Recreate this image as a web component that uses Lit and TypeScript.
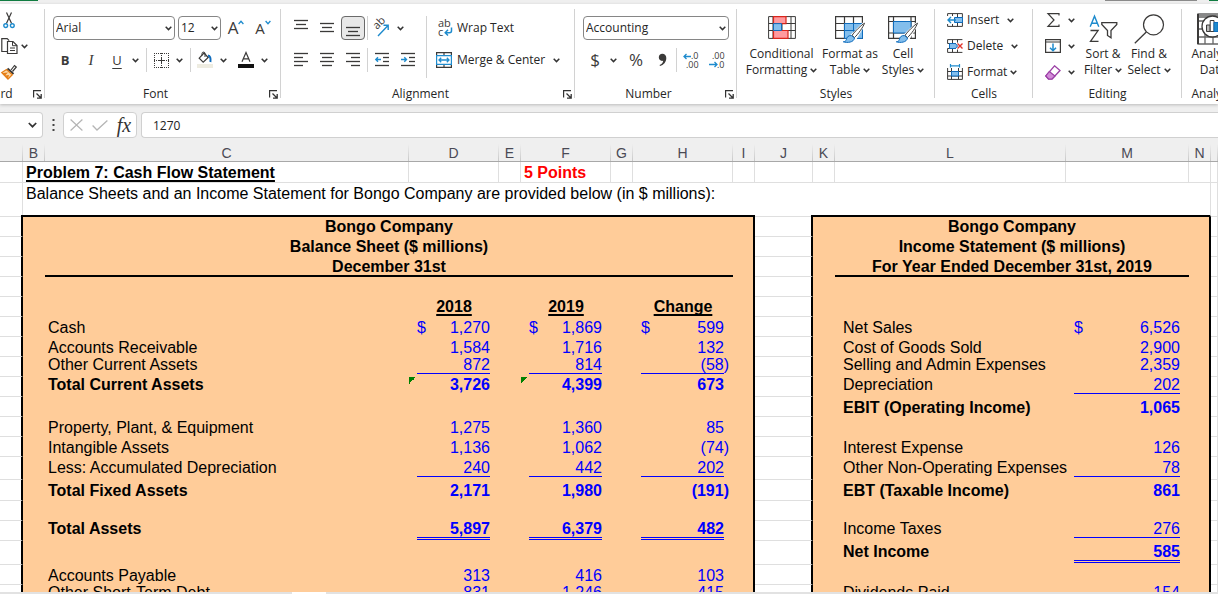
import { LitElement, html, css, svg, nothing, TemplateResult } from "lit";
import { customElement, property } from "lit/decorators.js";
import { classMap } from "lit/directives/class-map.js";

const icon = (w: number, h: number, body: unknown) =>
  html`<svg class="icon" width=${w} height=${h} viewBox="0 0 ${w} ${h}" fill="none" aria-hidden="true">${body}</svg>`;

const INK = "#3b3a39";
const BLUE = "#1e8bcd";
const DEEP = "#0f6cbd";
const SKY = "#83beec";

const chevron = icon(7, 5, svg`<path d="M.7 .8 3.5 3.6 6.3 .8" stroke="#333" stroke-width="1.5"/>`);

/** Horizontal strokes given as [x1, x2, y]. */
const bars = (rows: number[][]) =>
  rows.map(([a, b, y]) => svg`<path d="M${a} ${y}H${b}" stroke=${INK} stroke-width="1.3"/>`);

const alignIcon = (rows: number[][]) => icon(14, 24, bars(rows));

const I = {
  cut: icon(12, 17, svg`<path d="M3.5 .5 8.6 11.4M8.5 .5 3.4 11.4" stroke=${INK} stroke-width="1.2"/>
    <circle cx="2.7" cy="13.6" r="1.9" stroke=${BLUE} stroke-width="1.4"/><circle cx="9.3" cy="13.6" r="1.9" stroke=${BLUE} stroke-width="1.4"/>`),
  copy: icon(17, 16, svg`<path d="M6 13.5H.8V.6h5.400l2 2" stroke=${INK} stroke-width="1.2"/>
    <path d="M6.500 3.500h5.500l4 4v8H6.500z" fill="#fff" stroke=${INK} stroke-width="1.200"/><path d="M11.500 3.500v4.200H16M9 10h5M9 12.500h5" stroke=${INK}/>`),
  brush: icon(16, 16, svg`<path d="M10 6 13.500 1.500 15.300 3 11.500 7.500" fill="#fff" stroke=${INK} stroke-width="1.200"/>
    <path d="M6.500 4.500 12.500 10" stroke=${INK} stroke-width="2"/><path d="M5.500 5.500 .8 8.500 7 15 11.300 10.800z" fill="#fbd9a8" stroke="#e67e16" stroke-width="1.300"/>
    <path d="M1.500 9 7 8.500 4 11.500 8 11 7 14.500z" fill="#e67e16"/>`),
  launcher: icon(9, 9, svg`<path d="M.6 7.500V.6H8" stroke="#333" stroke-width="1.200"/><path d="M3.500 3.500 8 8M8.200 4v4.200H4" stroke="#333" stroke-width="1.300"/>`),
  up: icon(6, 5, svg`<path d="M.6 4 3 1.300 5.400 4" stroke=${BLUE} stroke-width="1.300"/>`),
  down: icon(6, 5, svg`<path d="M.6 1 3 3.700 5.400 1" stroke=${BLUE} stroke-width="1.300"/>`),
  borders: icon(15, 15, svg`<path d="M0 .5H15M0 14.500H15M.5 0V15M14.500 0V15" stroke=${INK} stroke-dasharray="1 1"/>
    <path d="M0 7.500H15M7.500 0V15" stroke=${INK} stroke-dasharray="1 1"/><path d="M5 7.500h5M7.500 5v5" stroke=${INK}/>`),
  bucket: icon(16, 16, svg`<path d="M7 1 2.200 6.200 6.200 10.200 11.200 5.500z" fill="#fff" stroke=${INK} stroke-width="1.200"/>
    <path d="M5 3.500V1.600a1.500 1.500 0 0 1 3 0V5" stroke=${INK}/><path d="M11 3.500c2 .3 3 2.500 2.400 6.500" stroke=${DEEP} stroke-width="2"/>
    <path d="M0 12h16v4H0z" fill="#eeece1"/>`),
  fontColor: icon(16, 16, svg`<path d="M4 9.800 8 .6 12 9.800M5.300 6.800h5.400" stroke=${INK} stroke-width="1.200"/><path d="M0 12h16v4H0z" fill="#111"/>`),
  top: alignIcon([[0, 14, 4.5], [2, 12, 8.5], [0, 14, 12.5]]),
  middle: alignIcon([[0, 14, 7.5], [2, 12, 11.5], [0, 14, 15.5]]),
  bottom: alignIcon([[0, 14, 11.5], [2, 12, 15.5], [0, 14, 19.5]]),
  left: alignIcon([[0, 14, 5.5], [0, 9, 9.5], [0, 14, 13.5], [0, 9, 17.5]]),
  center: alignIcon([[0, 14, 5.5], [2, 12, 9.5], [0, 14, 13.5], [2, 12, 17.5]]),
  right: alignIcon([[0, 14, 5.5], [5, 14, 9.5], [0, 14, 13.5], [5, 14, 17.5]]),
  outdent: icon(14, 24, [bars([[0, 14, 5.5], [8, 14, 9.5], [8, 14, 13.5], [0, 14, 17.5]]),
    svg`<path d="M6 11.500H.8M3 9.200.8 11.500 3 13.800" stroke=${BLUE} stroke-width="1.400"/>`]),
  indent: icon(14, 24, [bars([[0, 14, 5.5], [8, 14, 9.5], [8, 14, 13.5], [0, 14, 17.5]]),
    svg`<path d="M0 11.500H5.500M3.300 9.200 5.500 11.500 3.300 13.800" stroke=${BLUE} stroke-width="1.400"/>`]),
  orient: icon(18, 18, svg`<text class="glyph" x="0" y="0" font-size="11" transform="translate(4 11) rotate(-45)">ab</text>
    <path d="M5 17 15 6.500M10.500 6.300H15.200V11" stroke=${BLUE} stroke-width="1.400"/>`),
  wrap: icon(16, 18, svg`<text class="glyph" x="2" y="8" font-size="11">ab</text><text class="glyph" x="2" y="17" font-size="11">c</text>
    <path d="M15.500 8.500v3.200a2 2 0 0 1-2 2H9.300M12 10.800 9.200 13.700 12 16.500" stroke=${BLUE} stroke-width="1.500"/>`),
  merge: icon(16, 16, svg`<path d="M.6.6h14.800v14.800H.6zM.6 3.600h14.800M.6 12.400h14.800M8 .6v3M8 12.400v3" stroke=${INK} stroke-width="1.200"/>
    <path d="M.6 3.600h14.800v8.800H.6z" fill="#fff" stroke=${BLUE} stroke-width="1.200"/><path d="M3 8h10M5.200 5.800 3 8l2.200 2.200M10.800 5.800 13 8l-2.200 2.200" stroke=${BLUE} stroke-width="1.300"/>`),
  comma: icon(9, 14, svg`<path d="M4.300.8c2.500 0 4 1.600 4 4.200 0 4-2.600 7-6.300 8l-.4-1c2.300-.9 3.500-2.300 3.600-4.200C2.500 8.400.8 6.700.8 4.300.8 2.300 2.300.8 4.300.8z" fill=${INK}/>`),
  decUp: icon(16, 17, svg`<text class="glyph" x="8" y="7" font-size="9">.0</text><text class="glyph" x="3" y="16" font-size="9">.00</text>
    <path d="M8 4.500H1M3.500 2 1 4.500 3.500 7" stroke=${BLUE} stroke-width="1.300"/>`),
  decDown: icon(16, 17, svg`<text class="glyph" x="3" y="7" font-size="9">.00</text><text class="glyph" x="8" y="16" font-size="9">.0</text>
    <path d="M0 12.500H8M5.500 10 8 12.500 5.500 15" stroke=${BLUE} stroke-width="1.300"/>`),
  conditional: icon(28, 26, svg`<path d="M.6.6h26.800v21.800H.6zM.6 7.500h26.800M.6 14.500h26.800M5 .6v21.800M14 .6v21.800M23 .6v21.800" stroke=${INK}/>
    <path d="M5.500.6H18v7H5.500zM5.500 14.500H20v7.900H5.500z" fill="#ff9a9f" stroke="#d9261c" stroke-width="1.200"/><path d="M5.500 7.600h8v6.900h-8z" fill=${SKY} stroke=${DEEP}/>`),
  formatTable: icon(30, 27, svg`<path d="M.6.6h26.800v21.800H.6zM.6 7.500h26.800M.6 14.500h26.800M9.500.6v21.800M18.500.6v21.800" stroke=${INK} stroke-width="1.200"/>
    <path d="M9.500 7.500h18v14.900h-18z" fill=${SKY}/><path d="M9.500 7.500h18v14.900h-18zM9.500 14.500h18M18.500 7.500v15" stroke=${DEEP}/>
    <path d="M29.500 7 16.500 20 20 23 29.500 7" fill="#fff" stroke="#fff" stroke-width="3"/><path d="M29.500 7.200C27 8.500 19.500 15.500 17 19.500l2.500 2C23 18.500 28.500 10.500 29.500 7.200z" fill="#fff" stroke=${INK}/>
    <path d="M16.500 19.600c-3-.5-5 1.700-5.200 4.200-.2 1-1.200 1.700-3 2 4 1.300 10.500.7 11.200-3.800z" fill=${SKY} stroke=${DEEP}/>`),
  cellStyles: icon(30, 27, svg`<path d="M.6.6h26.800v21.800H.6zM.6 5.500h26.800M.6 17h26.800M5.500.6v21.800M23 .6v21.800" stroke=${INK} stroke-width="1.200"/>
    <path d="M5.500 5.500H23V17H5.500z" fill=${SKY} stroke=${DEEP}/>
    <path d="M29.500 7 16.500 20 20 23 29.500 7" fill="#fff" stroke="#fff" stroke-width="3"/><path d="M29.500 7.200C27 8.500 19.500 15.500 17 19.500l2.500 2C23 18.500 28.500 10.500 29.500 7.200z" fill="#fff" stroke=${INK}/>
    <path d="M16.500 19.600c-3-.5-5 1.700-5.200 4.200-.2 1-1.200 1.700-3 2 4 1.300 10.500.7 11.200-3.800z" fill=${SKY} stroke=${DEEP}/>`),
  insert: icon(16, 14, svg`<path d="M.6.6h14.800v12.800H.6zM.6 4.500h14.800M.6 9.500h14.800M5.500.6v12.800M10.500.6v12.800" stroke=${INK}/>
    <path d="M0 3h9v8H0z" fill="#fff"/><path d="M7.500 4.500h8v5h-8z" fill=${SKY} stroke=${DEEP}/><path d="M9 7H1M4 4 1 7l3 3" stroke=${BLUE} stroke-width="1.400"/>`),
  remove: icon(16, 14, svg`<path d="M9 .6H.6v3.900H9M9 13.400H.6V9.500H9M5.500.6v3.900M5.500 9.500v3.900M15.400.6H9M15.400 13.400H9M10.500.6v3M10.500 10.500v3" stroke=${INK}/>
    <path d="M2.500 4.500h6l2 2.500-2 2.500h-6z" fill=${SKY} stroke=${DEEP}/><path d="M10.500 4.500l5 5M15.500 4.500l-5 5" stroke="#e0352b" stroke-width="1.400"/>`),
  format: icon(16, 16, svg`<path d="M.6 4v11.400h14.800V4M.6 7.500h14.800M.6 12h14.800M4.500 4v11.400M11.500 4v11.400" stroke=${INK}/>
    <path d="M4.500 7.500h7V12h-7z" fill=${SKY} stroke=${DEEP}/><path d="M3.500 1.800h9M3.500 0v3.600M12.500 0v3.600" stroke=${BLUE} stroke-width="1.200"/>`),
  sum: icon(13, 14, svg`<path d="M12 2.500V.7H1l6 6.300-6 6.300h11v-1.800" stroke=${INK} stroke-width="1.200"/>`),
  fill: icon(16, 14, svg`<path d="M.6.6h14.800v12.800H.6zM.6 3h14.800" stroke=${INK} stroke-width="1.200"/><path d="M8 4.500v7M5 8.700l3 3 3-3" stroke=${BLUE} stroke-width="1.500"/>`),
  erase: icon(16, 15, svg`<path d="M9.500.8 15 5.500 7 14H3.500L.8 11z" fill="#fff" stroke="#9b3fa5" stroke-width="1.300"/><path d="M4.300 6.500 10 11 7 14H3.500L.8 11z" fill="#d28bd8" stroke="#9b3fa5" stroke-width="1.200"/>`),
  sort: icon(28, 28, svg`<path d="M1.200 11.800 5.500 1.200 9.800 11.800M2.700 8.200h5.600" stroke=${BLUE} stroke-width="1.400"/>
    <path d="M1.500 15.500h7.600L1.500 26.300h8" stroke=${INK} stroke-width="1.300"/><path d="M12.800 7.600h15v1.900l-5.800 6v7.300l-3.500-2.300v-5l-5.700-6z" fill="#fff" stroke=${INK} stroke-width="1.300"/>`),
  find: icon(30, 30, svg`<circle cx="19.500" cy="10.800" r="10" stroke=${INK} stroke-width="1.200"/><path d="M12.300 18 .8 29.300" stroke=${INK} stroke-width="1.300"/>`),
  analyze: icon(32, 32, svg`<path d="M1 1h30v30H1zM1 8h30M1 16h30M1 24h30M8 16v15M16 24v7M24 24v7" stroke="#666" stroke-width="1.300"/><path d="M1 1h30v4H1z" fill="#888"/><path d="M1 31V1" stroke=${INK} stroke-width="2"/>
    <circle cx="15.500" cy="13.500" r="10.500" fill="#fff" stroke=${INK} stroke-width="1.300"/><path d="M9.500 12h3.700v6.500H9.500z" fill="#bbb" stroke=${INK}/><path d="M13.200 7.500H17v11h-3.800z" fill="#fff" stroke=${INK}/><path d="M17 9.500h4v9h-4z" fill=${BLUE} stroke=${DEEP}/>`),
  cancel: icon(13, 12, svg`<path d="M.6.5 12.400 11.500M12.400.5.6 11.500" stroke="#b5b5b5" stroke-width="1.200"/>`),
  accept: icon(16, 11, svg`<path d="M.6 5.500 5 10 15.400.6" stroke="#b5b5b5" stroke-width="1.300"/>`),
  dots: icon(3, 12, svg`<path d="M.5 1h2M.5 6h2M.5 11h2" stroke="#444" stroke-width="2"/>`),
  nameArrow: icon(9, 6, svg`<path d="M.8 1 4.500 4.700 8.200 1" stroke="#333" stroke-width="1.700"/>`),
};

@customElement("ribbon-bar")
export class RibbonBar extends LitElement {
  static styles = css`
    :host { display: flex; height: 100px; background: #fff; overflow: hidden; font: 12px/16px "Open Sans", "Noto Sans", sans-serif; color: #262626; box-shadow: 0 1px 3px #bbb; position: relative; }
    button, select { font: inherit; color: inherit; }
    button { display: flex; align-items: center; justify-content: center; padding: 0; margin: 0; border: 0; background: none; white-space: nowrap; }
    .icon { display: block; flex: none; overflow: visible; }
    .glyph { fill: #3b3a39; font-family: "Open Sans", sans-serif; }
    .group { flex: none; display: flex; flex-direction: column; box-sizing: border-box; background: linear-gradient(#d2d2d2, #d2d2d2) right 5px / 1px 89px no-repeat; }
    .clipboard { width: 104px; margin-left: -59px; }
    .font { width: 236px; }
    .alignment { width: 294px; }
    .number { width: 162px; }
    .styles { width: 198px; }
    .cells { width: 98px; }
    .editing { width: 149px; }
    .analysis { width: 64px; }
    .body { flex: 1; display: flex; padding: 12px 0 0 8px; box-sizing: border-box; }
    .clipboard .body { padding-left: 59px; }
    .styles .body { padding-left: 6px; }
    .cells .body { padding-left: 12px; }
    .analysis .body { padding-left: 5px; }
    .foot { display: flex; height: 20px; align-items: center; }
    .name { flex: 1; text-align: center; }
    .launch { width: 15px; }
    .stack { display: flex; flex-direction: column; gap: 8px; }
    .tight { gap: 2px; margin-top: -8px; }
    .row { display: flex; height: 24px; gap: 2px; align-items: center; }
    .pickers { gap: 3px; }
    .tool { width: 24px; height: 24px; color: #3b3a39; }
    .clipboard .tool { width: 18px; }
    .split { display: flex; margin-right: 2px; }
    .arrow { width: 13px; height: 24px; }
    .on { background: #e8e8e8; outline: 1px solid #6a6a6a; outline-offset: -1px; border-radius: 4px; }
    .rule { width: 1px; height: 24px; background: #d2d2d2; }
    .tall { height: 62px; margin: 0 8px 0 6px; }
    .bold { font-weight: 700; font-size: 13px; }
    .italic { font: italic 15px/24px "Liberation Serif", serif; }
    .under { font-size: 13px; text-decoration: underline; text-underline-offset: 3px; }
    .grow { font-size: 17px; }
    .shrink { font-size: 15px; }
    .grow .icon, .shrink .icon { align-self: flex-start; margin-top: 4px; }
    .money { font-size: 17px; }
    .wide { gap: 4px; height: 24px; }
    .slot { width: 18px; display: flex; justify-content: center; }
    .cells .slot { width: 16px; }
    .apart { margin-left: 3px; }
    .picker { display: grid; height: 24px; }
    .picker select { grid-area: 1 / 1; appearance: none; width: 100%; height: 24px; margin: 0; padding: 0 2px; border: 1px solid #868686; border-radius: 4px; background: #fff; }
    .picker .icon { grid-area: 1 / 1; align-self: center; justify-self: end; margin-right: 3px; pointer-events: none; }
    .face { width: 122px; }
    .size { width: 43px; }
    .kind { width: 146px; }
    .big { flex-direction: column; justify-content: flex-start; height: 66px; }
    .art { height: 30px; display: flex; }
    .sized-77 { width: 77px; }
    .sized-60 { width: 60px; }
    .sized-46 { width: 46px; }
    .sized-52 { width: 52px; }
    .line { display: flex; align-items: center; gap: 3px; }
    .editing .big, .analysis .big { margin-top: -5px; height: 71px; }
    .editing .art, .analysis .art { height: 35px; align-items: center; }
  `;

  private group(cls: string, name: string, body: TemplateResult, launcher = false) {
    return html`<section class="group ${cls}" aria-label=${name}>
      <div class="body">${body}</div>
      <div class="foot"><span class="name">${name}</span>${launcher
        ? html`<button class="launch" aria-label="${name} settings">${I.launcher}</button>` : nothing}</div>
    </section>`;
  }

  private tool(label: string, face: unknown, cls = "") {
    return html`<button class="tool ${cls}" title=${label} aria-label=${label}>${face}</button>`;
  }

  private split(label: string, face: unknown, cls = "") {
    return html`<span class="split">${this.tool(label, face, cls)}<button class="arrow" aria-label="${label} options">${chevron}</button></span>`;
  }

  private wide(label: string, art: unknown, tail: unknown = nothing) {
    return html`<div class="row split"><button class="wide"><span class="slot">${art}</span>${label}</button>${tail}</div>`;
  }

  private big(cls: string, art: unknown, first: string, second: string, arrow = true) {
    return html`<button class="big ${cls}"><span class="art">${art}</span><span>${first}</span>
      <span class="line">${second}${arrow ? chevron : nothing}</span></button>`;
  }

  private picker(cls: string, label: string, options: string[]) {
    return html`<span class="picker ${cls}"><select aria-label=${label}>${options.map((o) => html`<option>${o}</option>`)}</select>${chevron}</span>`;
  }

  render() {
    const rule = html`<span class="rule"></span>`;
    const apart = html`<button class="arrow apart" aria-label="More options">${chevron}</button>`;
    return html`
      ${this.group("clipboard", "Clipboard", html`<div class="stack tight">
        <div class="row">${this.tool("Cut", I.cut)}</div>
        <div class="row">${this.split("Copy", I.copy)}</div>
        <div class="row">${this.tool("Format Painter", I.brush)}</div>
      </div>`, true)}
      ${this.group("font", "Font", html`<div class="stack">
        <div class="row pickers">${this.picker("face", "Font", ["Arial"])}${this.picker("size", "Font size", ["12"])}
          ${this.tool("Increase Font Size", html`A${I.up}`, "grow")}${this.tool("Decrease Font Size", html`A${I.down}`, "shrink")}</div>
        <div class="row">${this.tool("Bold", "B", "bold")}${this.tool("Italic", "I", "italic")}${this.split("Underline", "U", "under")}
          ${rule}${this.split("Borders", I.borders)}${rule}${this.split("Fill Color", I.bucket)}${this.split("Font Color", I.fontColor)}</div>
      </div>`, true)}
      ${this.group("alignment", "Alignment", html`<div class="stack">
        <div class="row">${this.tool("Top Align", I.top)}${this.tool("Middle Align", I.middle)}${this.tool("Bottom Align", I.bottom, "on")}
          ${rule}${this.split("Orientation", I.orient)}</div>
        <div class="row">${this.tool("Align Left", I.left)}${this.tool("Center", I.center)}${this.tool("Align Right", I.right)}
          ${rule}${this.tool("Decrease Indent", I.outdent)}${this.tool("Increase Indent", I.indent)}</div>
      </div><span class="rule tall"></span><div class="stack">
        ${this.wide("Wrap Text", I.wrap)}${this.wide("Merge & Center", I.merge, apart)}
      </div>`, true)}
      ${this.group("number", "Number", html`<div class="stack">
        <div class="row">${this.picker("kind", "Number format", ["Accounting"])}</div>
        <div class="row">${this.split("Accounting Number Format", "$", "money")}${this.tool("Percent Style", "%", "money")}${this.tool("Comma Style", I.comma)}
          ${rule}${this.tool("Increase Decimal", I.decUp)}${this.tool("Decrease Decimal", I.decDown)}</div>
      </div>`, true)}
      ${this.group("styles", "Styles", html`${this.big("sized-77", I.conditional, "Conditional", "Formatting")}
        ${this.big("sized-60", I.formatTable, "Format as", "Table")}${this.big("sized-46", I.cellStyles, "Cell", "Styles")}`)}
      ${this.group("cells", "Cells", html`<div class="stack tight">
        ${this.wide("Insert", I.insert, apart)}${this.wide("Delete", I.remove, apart)}
        <div class="row"><button class="wide"><span class="slot">${I.format}</span><span class="line">Format ${chevron}</span></button></div>
      </div>`)}
      ${this.group("editing", "Editing", html`<div class="stack tight">
        <div class="row">${this.split("AutoSum", I.sum)}</div><div class="row">${this.split("Fill", I.fill)}</div><div class="row">${this.split("Clear", I.erase)}</div>
      </div>${this.big("sized-46", I.sort, "Sort &", "Filter")}${this.big("sized-46", I.find, "Find &", "Select")}`)}
      ${this.group("analysis", "Analysis", this.big("sized-52", I.analyze, "Analyze", "Data", false))}
    `;
  }
}

@customElement("formula-bar")
export class FormulaBar extends LitElement {
  static styles = css`
    :host { display: flex; padding: 8px 0 6px; background: #efefef; font: 12px/16px "Open Sans", "Noto Sans", sans-serif; }
    button { display: flex; align-items: center; justify-content: center; padding: 0; border: 0; background: none; color: #333; }
    .box { height: 26px; box-sizing: border-box; background: #fff; border: 1px solid #d0d0d0; border-radius: 4px; }
    .name { width: 43px; display: flex; justify-content: flex-end; border-left: 0; border-radius: 0 4px 4px 0; }
    .name button { width: 20px; }
    .dots { width: 20px; }
    .marks { width: 74px; display: grid; grid-template-columns: repeat(3, 1fr); margin-right: 4px; }
    .fx { font: italic 20px/20px "Liberation Serif", serif; }
    .value { flex: 1; min-width: 0; padding: 0 11px; border-right: 0; border-radius: 4px 0 0 4px; font: inherit; color: #222; }
  `;
  render() {
    return html`
      <div class="box name"><button aria-label="Name box">${I.nameArrow}</button></div>
      <button class="dots" aria-label="Resize">${I.dots}</button>
      <div class="box marks"><button aria-label="Cancel">${I.cancel}</button><button aria-label="Enter">${I.accept}</button><button class="fx" aria-label="Insert function">fx</button></div>
      <input class="box value" aria-label="Formula" .value=${"1270"} />`;
  }
}

type Rule = "" | "single" | "double";
interface Side { label?: string; bold?: boolean; rule?: Rule; dollar?: boolean; values?: string[]; flag?: boolean }
interface Line { height: number; raised?: boolean; left?: Side; right?: Side }

const LINES: Line[] = [
  { height: 20, left: { label: "Cash", dollar: true, values: ["1,270", "1,869", "599"] }, right: { label: "Net Sales", dollar: true, values: ["6,526"] } },
  { height: 20, left: { label: "Accounts Receivable", values: ["1,584", "1,716", "132"] }, right: { label: "Cost of Goods Sold", values: ["2,900"] } },
  { height: 20, raised: true, left: { label: "Other Current Assets", rule: "single", values: ["872", "814", "(58)"] }, right: { label: "Selling and Admin Expenses", values: ["2,359"] } },
  { height: 20, raised: true, left: { label: "Total Current Assets", bold: true, flag: true, values: ["3,726", "4,399", "673"] }, right: { label: "Depreciation", rule: "single", values: ["202"] } },
  { height: 20, right: { label: "EBIT (Operating Income)", bold: true, values: ["1,065"] } },
  { height: 20, left: { label: "Property, Plant, & Equipment", values: ["1,275", "1,360", "85"] } },
  { height: 20, left: { label: "Intangible Assets", values: ["1,136", "1,062", "(74)"] }, right: { label: "Interest Expense", values: ["126"] } },
  { height: 23, left: { label: "Less: Accumulated Depreciation", rule: "single", values: ["240", "442", "202"] }, right: { label: "Other Non-Operating Expenses", rule: "single", values: ["78"] } },
  { height: 21, left: { label: "Total Fixed Assets", bold: true, values: ["2,171", "1,980", "(191)"] }, right: { label: "EBT (Taxable Income)", bold: true, values: ["861"] } },
  { height: 20 },
  { height: 20, raised: true, left: { label: "Total Assets", bold: true, rule: "double", values: ["5,897", "6,379", "482"] }, right: { label: "Income Taxes", rule: "single", values: ["276"] } },
  { height: 24, right: { label: "Net Income", bold: true, rule: "double", values: ["585"] } },
  { height: 20, left: { label: "Accounts Payable", values: ["313", "416", "103"] } },
  { height: 20, raised: true, left: { label: "Other Short-Term Debt", values: ["831", "1,246", "415"] }, right: { label: "Dividends Paid", values: ["154"] } },
];

const COLUMNS: [string, number][] = [
  ["", 23], ["B", 22], ["C", 364], ["D", 90], ["E", 22], ["F", 90], ["G", 22], ["H", 100], ["I", 22],
  ["J", 58], ["K", 22], ["L", 231], ["M", 123], ["N", 22], ["", 0],
];

@customElement("work-sheet")
export class WorkSheet extends LitElement {
  @property({ attribute: false }) lines: Line[] = LINES;

  static styles = css`
    :host { display: block; overflow: hidden; background: #fff; font: 16px/16px "Liberation Sans", Arial, sans-serif; color: #000; }
    table { table-layout: fixed; width: 100%; min-width: 1218px; border-collapse: separate; border-spacing: 0; }
    th, td { box-sizing: border-box; padding: 3px 0 0; vertical-align: top; text-align: left; white-space: nowrap; font-weight: 400; border: 0 solid #dfdfdf; border-width: 0 1px 1px 0; }
    .letters th { height: 18px; padding: 1px 1px 0 0; font-size: 14px; text-align: center; color: #4a4a55; border-bottom-color: #a8a8a8; border-right: 0; background: linear-gradient(#efefef, #c8c8c8) right / 1px 100% no-repeat #efefef; }
    .first { height: 21px; }
    .second { height: 34px; }
    .text { padding-left: 3px; overflow: visible; }
    .run { border-right-width: 0; }
    .heading { font-weight: 700; text-decoration: underline; text-decoration-thickness: 2px; text-underline-offset: 2px; text-decoration-skip-ink: none; }
    .points { font-weight: 700; color: #f00; padding-left: 3px; }
    .lid { border-bottom: 2px solid #000; }
    .fill { background-color: #fc9; border-width: 0; }
    .edge { border-right: 2px solid #000; }
    .corner { box-shadow: -2px -2px 0 #000; }
    .title { font-weight: 700; text-align: center; padding-top: 2px; }
    .ruled { border-bottom: 2px solid #000; }
    .year { font-weight: 700; text-align: center; padding-top: 2px; }
    .label { padding-left: 3px; }
    .inset { padding-left: 8px; }
    .bold { font-weight: 700; }
    .raised > * { padding-top: 0; }
    .h20 { height: 20px; }
    .h21 { height: 21px; }
    .h23 { height: 23px; }
    .h24 { height: 24px; }
    .amount { display: flex; justify-content: space-between; margin: 0 9px 0 8px; color: #00f; }
    .single { border-bottom: 1px solid #00f; }
    .double { border-bottom: 3px double #00f; }
    .value { margin-left: auto; }
    .negative { margin-right: -5px; }
    .flag { background-image: linear-gradient(135deg, #008000 50%, transparent 50%); background-size: 7px 7px; background-repeat: no-repeat; }
  `;

  private row(h: number, left: TemplateResult, right: TemplateResult, raised = false, corner = false) {
    const c = corner ? "corner" : "";
    return html`<tr class=${classMap({ ["h" + h]: true, raised })}><td class="edge"></td><td class="fill ${c}"></td>${left}<td class="fill edge"></td>
      <td class="edge"></td><td class="fill ${c}"></td>${right}<td class="fill edge"></td><td></td></tr>`;
  }

  private title(left: string, right: string, ruled: boolean, corner: boolean) {
    const cls = `fill title ${ruled ? "ruled" : ""}`;
    return this.row(20, html`<th class=${cls} colspan="6">${left}</th>`, html`<th class=${cls} colspan="2">${right}</th>`, false, corner);
  }

  private cells(side: Side | undefined, count: number, inset: boolean) {
    const s = side ?? {};
    const out: TemplateResult[] = [html`<th scope="row" class=${classMap({ fill: true, label: !inset, inset, bold: !!s.bold })}>${s.label ?? nothing}</th>`];
    for (let i = 0; i < count; i++) {
      const v = s.values?.[i];
      if (i > 0) out.push(html`<td class="fill"></td>`);
      out.push(html`<td class=${classMap({ fill: true, bold: !!s.bold, flag: !!s.flag && i < 2 })}>${v
        ? html`<div class="amount ${s.rule ?? ""}">${s.dollar ? html`<span>$</span>` : nothing}<span class=${classMap({ value: true, negative: v.startsWith("(") })}>${v}</span></div>`
        : nothing}</td>`);
    }
    return html`${out}`;
  }

  render() {
    const blank = html`<td class="fill" colspan="6"></td>`;
    const blankRight = html`<td class="fill" colspan="2"></td>`;
    const year = (t: string) => html`<th class="fill year"><span class="heading">${t}</span></th>`;
    return html`<table>
      <colgroup>${COLUMNS.map(([, w]) => (w ? html`<col style="width:${w}px" />` : html`<col />`))}</colgroup>
      <thead><tr class="letters">${COLUMNS.map(([n]) => html`<th scope="col">${n}</th>`)}</tr></thead>
      <tbody>
        <tr class="first"><td></td><td class="text" colspan="2"><span class="heading">Problem 7: Cash Flow Statement</span></td><td></td><td></td>
          <td class="points">5 Points</td><td></td><td></td><td></td><td></td><td></td><td></td><td></td><td></td><td></td></tr>
        <tr class="second"><td></td><td class="text run lid" colspan="8">Balance Sheets and an Income Statement for Bongo Company are provided below (in $ millions):</td>
          <td class="run"></td><td class="lid" colspan="4"></td><td></td></tr>
        ${this.title("Bongo Company", "Bongo Company", false, true)}
        ${this.title("Balance Sheet ($ millions)", "Income Statement ($ millions)", false, false)}
        ${this.title("December 31st", "For Year Ended December 31st, 2019", true, false)}
        ${this.row(20, blank, blankRight)}
        ${this.row(20, html`<td class="fill"></td>${year("2018")}<td class="fill"></td>${year("2019")}<td class="fill"></td>${year("Change")}`, blankRight)}
        ${this.lines.map((l) => this.row(l.height, this.cells(l.left, 3, false), this.cells(l.right, 1, true), l.raised))}
      </tbody>
    </table>`;
  }
}

@customElement("app-root")
export class AppRoot extends LitElement {
  static styles = css`
    :host { display: flex; flex-direction: column; height: 100vh; overflow: hidden; background: #efefef; }
    .strip { flex: none; height: 4px; display: flex; justify-content: space-between; background: #efefef; }
    .tab { width: 38px; height: 1px; background: #107c41; }
    .share { display: flex; gap: 12px; }
    .comments { width: 92px; height: 1px; background: #8a8a8a; }
    .green { width: 9px; height: 1px; background: #107c41; }
    ribbon-bar, formula-bar { flex: none; }
    work-sheet { flex: 1; min-height: 0; }
    .tabs { flex: none; height: 2px; padding-left: 292px; background: #e2e2e2; }
    .sheet { width: 34px; height: 2px; background: #fff; }
  `;
  render() {
    return html`
      <div class="strip"><span class="tab"></span><span class="share"><span class="comments"></span><span class="green"></span></span></div>
      <ribbon-bar></ribbon-bar>
      <formula-bar></formula-bar>
      <work-sheet></work-sheet>
      <div class="tabs"><div class="sheet"></div></div>`;
  }
}
